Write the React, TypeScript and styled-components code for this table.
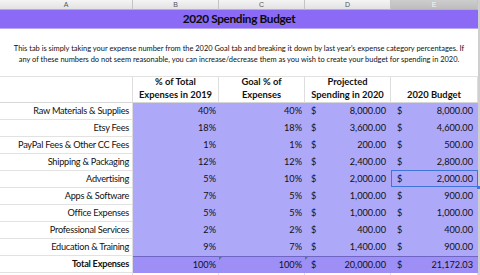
import React from "react";
import styled, { createGlobalStyle, css } from "styled-components";

const GlobalStyle = createGlobalStyle`
  html, body { margin: 0; padding: 0; }
  body {
    background: #cfcfcf;
    font-family: Lato, "Open Sans", "Liberation Sans", sans-serif;
    color: #111;
  }
`;

const COLS = "133px 86px 86px 86px 87px";

const Page = styled.div`
  width: 480px;
  height: 275px;
  overflow: hidden;
  background: #cfcfcf;
`;

const Sheet = styled.div`
  width: 478px;
  height: 275px;
  background: #ffffff;
  display: grid;
  grid-template-columns: ${COLS};
  grid-auto-rows: min-content;
`;

const ColHead = styled.div<{ $selected?: boolean }>`
  height: 10px;
  box-sizing: border-box;
  border-right: 1px solid #c4c4c4;
  border-bottom: 1px solid #b4b4b4;
  background: ${(p) =>
    p.$selected
      ? "linear-gradient(#cdcdcd, #bdbdbd)"
      : "linear-gradient(#f4f4f4, #e2e2e2)"};
  color: ${(p) => (p.$selected ? "#f6f6f6" : "#555")};
  font-family: "Liberation Sans", Arial, sans-serif;
  font-size: 7px;
  line-height: 9px;
  text-align: center;
`;

const Title = styled.div`
  grid-column: 1 / -1;
  height: 19px;
  box-sizing: border-box;
  background: #8b6bf6;
  border-bottom: 1px solid #b7a8fa;
  font-weight: 700;
  font-size: 11.8px;
  letter-spacing: -0.35px;
  line-height: 18px;
  text-align: center;
  color: #0a0a0a;
`;

const Intro = styled.div`
  grid-column: 1 / -1;
  height: 48px;
  box-sizing: border-box;
  display: flex;
  flex-direction: column;
  justify-content: center;
  align-items: center;
  padding-top: 2px;
  font-size: 7.45px;
  line-height: 11px;
  color: #111;
  border-bottom: 1px solid #e2e2e2;
  white-space: nowrap;
`;

const Line = styled.span`
  display: block;
`;

type Fill = "none" | "data" | "total";

const fillColor: Record<Fill, string> = {
  none: "#ffffff",
  data: "#aea8f8",
  total: "#9d8ff5",
};

const Cell = styled.div<{
  $fill?: Fill;
  $bold?: boolean;
  $split?: boolean;
  $selected?: boolean;
  $flag?: boolean;
}>`
  position: relative;
  height: 17px;
  box-sizing: border-box;
  padding: 0 3px 0 5px;
  font-size: 9.2px;
  line-height: 16px;
  white-space: nowrap;
  font-weight: ${(p) => (p.$bold ? 700 : 400)};
  text-align: right;
  background: ${(p) => fillColor[p.$fill ?? "none"]};
  ${(p) =>
    (p.$fill ?? "none") === "none"
      ? css`
          letter-spacing: -0.25px;
          border-right: 1px solid #dedede;
          border-bottom: 1px solid #e2e2e2;
        `
      : css`
          border-bottom: 1px solid transparent;
        `}
  ${(p) =>
    p.$fill === "total" &&
    css`
      border-top: 1px solid #6f66c4;
      line-height: 15px;
    `}
  ${(p) =>
    p.$split &&
    css`
      display: flex;
      justify-content: space-between;
      padding: 0 5px 0 6px;
    `}
  ${(p) =>
    p.$selected &&
    css`
      &::after {
        content: "";
        position: absolute;
        left: 0;
        top: -1px;
        right: 0;
        bottom: 0;
        border: 1px solid #3f74d8;
      }
      &::before {
        content: "";
        position: absolute;
        right: -2px;
        bottom: -2px;
        width: 3px;
        height: 3px;
        background: #3f74d8;
        z-index: 2;
      }
    `}
  ${(p) =>
    p.$flag &&
    css`
      &::before {
        content: "";
        position: absolute;
        left: 0;
        top: 0;
        width: 0;
        height: 0;
        border-top: 3px solid #2f9a3a;
        border-right: 3px solid transparent;
      }
    `}
`;

const HeadCell = styled.div`
  height: 26px;
  box-sizing: border-box;
  display: flex;
  flex-direction: column;
  justify-content: flex-end;
  align-items: center;
  padding-bottom: 1px;
  font-weight: 700;
  font-size: 9.4px;
  line-height: 12.5px;
  text-align: center;
  border-right: 1px solid #dedede;
  border-bottom: 1px solid #d6d6d6;
  white-space: nowrap;
`;

const Filler = styled.div`
  height: 3px;
  border-right: 1px solid #dedede;
`;

type Row = {
  label: string;
  pct: string;
  goal: string;
  proj: string;
  budget: string;
};

const rows: Row[] = [
  { label: "Raw Materials & Supplies", pct: "40%", goal: "40%", proj: "8,000.00", budget: "8,000.00" },
  { label: "Etsy Fees", pct: "18%", goal: "18%", proj: "3,600.00", budget: "4,600.00" },
  { label: "PayPal Fees & Other CC Fees", pct: "1%", goal: "1%", proj: "200.00", budget: "500.00" },
  { label: "Shipping & Packaging", pct: "12%", goal: "12%", proj: "2,400.00", budget: "2,800.00" },
  { label: "Advertising", pct: "5%", goal: "10%", proj: "2,000.00", budget: "2,000.00" },
  { label: "Apps & Software", pct: "7%", goal: "5%", proj: "1,000.00", budget: "900.00" },
  { label: "Office Expenses", pct: "5%", goal: "5%", proj: "1,000.00", budget: "1,000.00" },
  { label: "Professional Services", pct: "2%", goal: "2%", proj: "400.00", budget: "400.00" },
  { label: "Education & Training", pct: "9%", goal: "7%", proj: "1,400.00", budget: "900.00" },
];

export default function App() {
  return (
    <Page>
      <GlobalStyle />
      <Sheet>
        <ColHead>A</ColHead>
        <ColHead>B</ColHead>
        <ColHead>C</ColHead>
        <ColHead>D</ColHead>
        <ColHead $selected>E</ColHead>

        <Title>2020 Spending Budget</Title>

        <Intro>
          <Line>
            This tab is simply taking your expense number from the 2020 Goal tab and breaking it down by last
            year's expense category percentages. If
          </Line>
          <Line>
            any of these numbers do not seem reasonable, you can increase/decrease them as you wish to create your
            budget for spending in 2020.
          </Line>
        </Intro>

        <HeadCell />
        <HeadCell>
          <span>% of Total</span>
          <span>Expenses in 2019</span>
        </HeadCell>
        <HeadCell>
          <span>Goal % of</span>
          <span>Expenses</span>
        </HeadCell>
        <HeadCell>
          <span>Projected</span>
          <span>Spending in 2020</span>
        </HeadCell>
        <HeadCell>
          <span>2020 Budget</span>
        </HeadCell>

        {rows.map((r) => (
          <React.Fragment key={r.label}>
            <Cell>{r.label}</Cell>
            <Cell $fill="data">{r.pct}</Cell>
            <Cell $fill="data">{r.goal}</Cell>
            <Cell $fill="data" $split>
              <span>$</span>
              <span>{r.proj}</span>
            </Cell>
            <Cell $fill="data" $split $selected={r.label === "Advertising"}>
              <span>$</span>
              <span>{r.budget}</span>
            </Cell>
          </React.Fragment>
        ))}

        <Cell $bold>Total Expenses</Cell>
        <Cell $fill="total">100%</Cell>
        <Cell $fill="total" $flag>100%</Cell>
        <Cell $fill="total" $split $flag>
          <span>$</span>
          <span>20,000.00</span>
        </Cell>
        <Cell $fill="total" $split>
          <span>$</span>
          <span>21,172.03</span>
        </Cell>

        <Filler />
        <Filler />
        <Filler />
        <Filler />
        <Filler />
      </Sheet>
    </Page>
  );
}
